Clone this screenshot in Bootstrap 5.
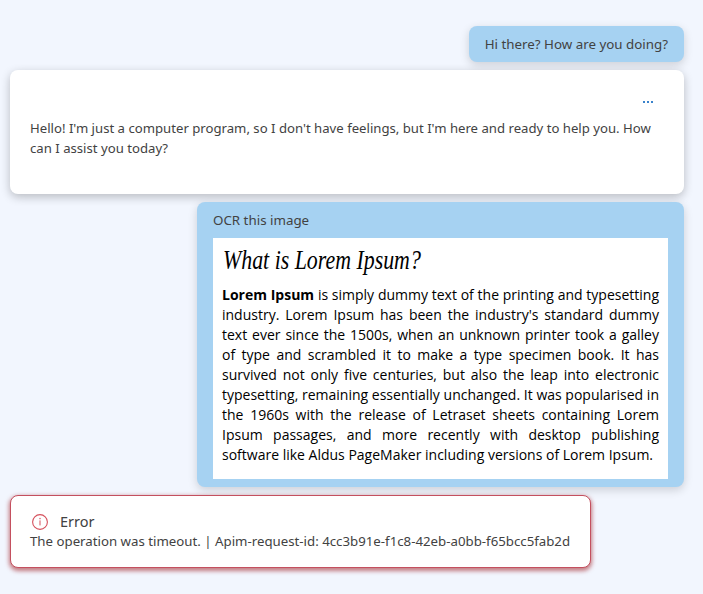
<!doctype html>
<html lang="en"><head><meta charset="utf-8"><title>Chat</title>
<link href="https://cdn.jsdelivr.net/npm/bootstrap@5.3.0/dist/css/bootstrap.min.css" rel="stylesheet">
<style>
html,body{height:100%}
body{background:#f2f6fe;font-family:"Noto Sans",sans-serif;font-size:13.35px;line-height:20px;color:#424242;overflow:hidden}
.chat-wrap{padding:26px 19px 0 10px;gap:8px}
.bubble{background:#a6d2f2;border-radius:8px;box-shadow:0 3px 10px rgba(0,0,0,.16)}
.bubble-text{padding:8px 16px}
.answer{background:#fff;border-radius:8px;box-shadow:0 3px 10px rgba(0,0,0,.24);height:124px;padding:20px 20px 0}
.dots{height:24px;padding:11px 11px 0 0}
.dots-row{gap:2px;height:2px}
.dots-row i{display:block;width:2px;height:2px;background:#3a83cc}
.answer-text{margin-top:4px;font-size:13.16px}
.ocr{width:487px;padding:8px 16px}
.ocr-label{margin-bottom:8px}
.shot{background:#fff;height:241px;padding:4px 9px 0;color:#000;font-family:"Open Sans",sans-serif}
.shot-title{font-family:"Liberation Serif",serif;font-style:italic;font-weight:400;font-size:27px;line-height:36px;margin:0 0 7px 1px;transform:scaleX(.81);transform-origin:left center;white-space:nowrap}
.shot-body{text-align:justify;font-size:14px;line-height:20px;margin:0}
.err{width:581px;height:73px;background:#fff;border:1px solid #c4505f;border-radius:8px;box-shadow:0 2px 4px 1px rgba(164,38,44,.6);padding:16px 10px 0 19px;white-space:nowrap}
.err-head{gap:12px;padding-left:2px;font-size:14.5px;line-height:19px}
.err-body{font-size:13.25px}
</style></head>
<body>
<div class="chat-wrap d-flex flex-column">
  <div class="bubble bubble-text align-self-end">Hi there? How are you doing?</div>
  <div class="answer">
    <div class="dots d-flex justify-content-end"><div class="dots-row d-flex"><i></i><i></i><i></i></div></div>
    <div class="answer-text">Hello! I'm just a computer program, so I don't have feelings, but I'm here and ready to help you. How can I assist you today?</div>
  </div>
  <div class="bubble ocr align-self-end">
    <div class="ocr-label">OCR this image</div>
    <div class="shot">
      <h1 class="shot-title">What is Lorem Ipsum?</h1>
      <p class="shot-body"><b>Lorem Ipsum</b> is simply dummy text of the printing and typesetting industry. Lorem Ipsum has been the industry's standard dummy text ever since the 1500s, when an unknown printer took a galley of type and scrambled it to make a type specimen book. It has survived not only five centuries, but also the leap into electronic typesetting, remaining essentially unchanged. It was popularised in the 1960s with the release of Letraset sheets containing Lorem Ipsum passages, and more recently with desktop publishing software like Aldus PageMaker including versions of Lorem Ipsum.</p>
    </div>
  </div>
  <div class="err">
    <div class="err-head d-flex align-items-center">
      <svg width="16" height="16" viewBox="0 0 16 16" fill="none"><circle cx="8" cy="8" r="7.4" stroke="#d5505c" stroke-width="1.1"/><rect x="7.5" y="6.4" width="1" height="5" fill="#d5505c"/><rect x="7.4" y="3.9" width="1.2" height="1.3" fill="#d5505c"/></svg>
      <span>Error</span>
    </div>
    <div class="err-body">The operation was timeout. | Apim-request-id: 4cc3b91e-f1c8-42eb-a0bb-f65bcc5fab2d</div>
  </div>
</div>
<script src="https://cdn.jsdelivr.net/npm/bootstrap@5.3.0/dist/js/bootstrap.bundle.min.js"></script>
</body></html>
